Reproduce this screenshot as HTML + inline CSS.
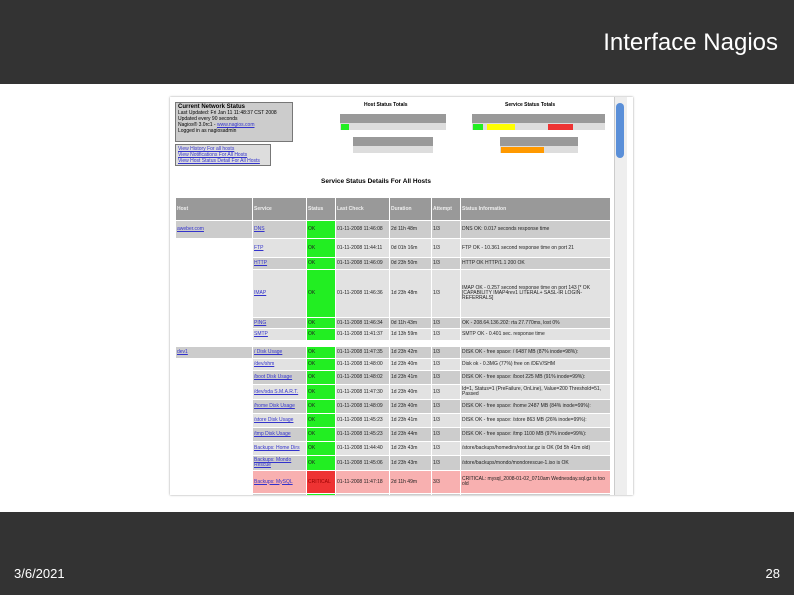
<!DOCTYPE html><html><head><style>
*{margin:0;padding:0;box-sizing:border-box}
body{width:794px;height:595px;position:relative;background:#fff;font-family:"Liberation Sans",sans-serif;overflow:hidden}
.bar{position:absolute;left:0;width:794px;background:#333}
.a{position:absolute}
table{border-collapse:separate;border-spacing:1px;table-layout:fixed;font-size:5px;color:#222}
td{overflow:hidden;padding:0 1px;line-height:5px;vertical-align:middle}
.h td{background:#999;color:#eee;font-weight:bold;font-size:5px}
.g td{background:#ccc}.l td{background:#e2e2e2}
td.ok{background:#2e2!important}td.cr{background:#e33!important;color:#900}
.r td{background:#f8b0b0}
a{color:#33c;text-decoration:underline}
.box{position:absolute;background:#ccc;border:1px solid #777;font-size:5px;line-height:6px;padding:1px 2px}
</style></head><body>
<div class="bar" style="top:0;height:84px"></div>
<div class="a" style="right:16px;top:29px;color:#fff;font-size:24px">Interface Nagios</div>
<div class="bar" style="top:512px;height:83px"></div>
<div class="a" style="left:14px;top:566px;color:#fff;font-size:13px">3/6/2021</div>
<div class="a" style="right:14px;top:566px;color:#fff;font-size:13px">28</div>
<div class="a" style="left:170px;top:97px;width:463px;height:398px;background:#fff;box-shadow:0 0 2px #999;overflow:hidden">
<div class="a" style="left:444px;top:0;width:13px;height:398px;background:#eee;border-left:1px solid #ccc"></div>
<div class="a" style="left:446px;top:6px;width:8px;height:55px;background:#5a8fd8;border-radius:4px"></div>
<div class="box" style="left:5px;top:5px;width:118px;height:40px"><b style="font-size:6px">Current Network Status</b><br>Last Updated: Fri Jan 11 11:48:37 CST 2008<br>Updated every 90 seconds<br>Nagios® 3.0rc1 - <a>www.nagios.com</a><br>Logged in as nagiosadmin</div>
<div class="box" style="left:5px;top:47px;width:96px;height:22px;background:#ddd"><a>View History For all hosts</a><br><a>View Notifications For All Hosts</a><br><a>View Host Status Detail For All Hosts</a></div>
<div class="a" style="left:194px;top:5px;font-size:5px;font-weight:bold">Host Status Totals</div>
<div class="a" style="left:170px;top:17px;width:106px;height:9px;background:#999"></div>
<div class="a" style="left:170px;top:26px;width:106px;height:7px;background:#ddd"></div>
<div class="a" style="left:171px;top:27px;width:8px;height:6px;background:#2e2"></div>
<div class="a" style="left:183px;top:40px;width:80px;height:9px;background:#999"></div>
<div class="a" style="left:183px;top:49px;width:80px;height:7px;background:#ddd"></div>
<div class="a" style="left:335px;top:5px;font-size:5px;font-weight:bold">Service Status Totals</div>
<div class="a" style="left:302px;top:17px;width:133px;height:9px;background:#999"></div>
<div class="a" style="left:302px;top:26px;width:133px;height:7px;background:#ddd"></div>
<div class="a" style="left:303px;top:27px;width:10px;height:6px;background:#2e2"></div>
<div class="a" style="left:317px;top:27px;width:28px;height:6px;background:#ff0"></div>
<div class="a" style="left:378px;top:27px;width:25px;height:6px;background:#e33"></div>
<div class="a" style="left:330px;top:40px;width:78px;height:9px;background:#999"></div>
<div class="a" style="left:330px;top:49px;width:78px;height:7px;background:#ddd"></div>
<div class="a" style="left:331px;top:50px;width:43px;height:6px;background:#f90"></div>
<div class="a" style="left:151px;top:81px;font-size:6.5px;font-weight:bold">Service Status Details For All Hosts</div>
<table class="a" style="left:5px;top:100px;width:436px">
<colgroup><col style="width:76px"><col style="width:53px"><col style="width:28px"><col style="width:53px"><col style="width:41px"><col style="width:28px"><col></colgroup>
<tr class="h" style="height:22px"><td>Host</td><td>Service</td><td class="ok" style="background:#999!important">Status</td><td>Last Check</td><td>Duration</td><td>Attempt</td><td>Status Information</td></tr>
<tr class="g" style="height:17px"><td><a>aweber.com</a></td><td><a>DNS</a></td><td class="ok">OK</td><td>01-11-2008 11:46:08</td><td>2d 11h 48m</td><td>1/3</td><td>DNS OK: 0.017 seconds response time</td></tr>
<tr class="l" style="height:18px"><td style="background:#fff"></td><td><a>FTP</a></td><td class="ok">OK</td><td>01-11-2008 11:44:11</td><td>0d 01h 16m</td><td>1/3</td><td>FTP OK - 10.361 second response time on port 21</td></tr>
<tr class="g" style="height:11px"><td style="background:#fff"></td><td><a>HTTP</a></td><td class="ok">OK</td><td>01-11-2008 11:46:09</td><td>0d 23h 50m</td><td>1/3</td><td>HTTP OK HTTP/1.1 200 OK</td></tr>
<tr class="l" style="height:47px"><td style="background:#fff"></td><td><a>IMAP</a></td><td class="ok">OK</td><td>01-11-2008 11:46:36</td><td>1d 23h 48m</td><td>1/3</td><td>IMAP OK - 0.257 second response time on port 143 [* OK [CAPABILITY IMAP4rev1 LITERAL+ SASL-IR LOGIN-REFERRALS]</td></tr>
<tr class="g" style="height:10px"><td style="background:#fff"></td><td><a>PING</a></td><td class="ok">OK</td><td>01-11-2008 11:46:34</td><td>0d 11h 43m</td><td>1/3</td><td>OK - 208.64.136.202: rta 27.770ms, lost 0%</td></tr>
<tr class="l" style="height:11px"><td style="background:#fff"></td><td><a>SMTP</a></td><td class="ok">OK</td><td>01-11-2008 11:41:37</td><td>1d 13h 59m</td><td>1/3</td><td>SMTP OK - 0.401 sec. response time</td></tr>
<tr style="height:5px"><td colspan="7"></td></tr>
<tr class="g" style="height:11px"><td><a>dev1</a></td><td><a>/ Disk Usage</a></td><td class="ok">OK</td><td>01-11-2008 11:47:35</td><td>1d 23h 42m</td><td>1/3</td><td>DISK OK - free space: / 6487 MB (87% inode=98%):</td></tr>
<tr class="l" style="height:11px"><td style="background:#fff"></td><td><a>/dev/shm</a></td><td class="ok">OK</td><td>01-11-2008 11:48:00</td><td>1d 23h 40m</td><td>1/3</td><td>Disk ok - 0.3MG (77%) free on /DEV/SHM</td></tr>
<tr class="g" style="height:13px"><td style="background:#fff"></td><td><a>/boot Disk Usage</a></td><td class="ok">OK</td><td>01-11-2008 11:48:02</td><td>1d 23h 41m</td><td>1/3</td><td>DISK OK - free space: /boot 225 MB (91% inode=99%):</td></tr>
<tr class="l" style="height:14px"><td style="background:#fff"></td><td><a>/dev/sda S.M.A.R.T.</a></td><td class="ok">OK</td><td>01-11-2008 11:47:30</td><td>1d 23h 40m</td><td>1/3</td><td>Id=1, Status=1 (PreFailure, OnLine), Value=200 Threshold=51, Passed</td></tr>
<tr class="g" style="height:13px"><td style="background:#fff"></td><td><a>/home Disk Usage</a></td><td class="ok">OK</td><td>01-11-2008 11:48:09</td><td>1d 23h 40m</td><td>1/3</td><td>DISK OK - free space: /home 2487 MB (84% inode=99%):</td></tr>
<tr class="l" style="height:13px"><td style="background:#fff"></td><td><a>/store Disk Usage</a></td><td class="ok">OK</td><td>01-11-2008 11:45:23</td><td>1d 23h 41m</td><td>1/3</td><td>DISK OK - free space: /store 863 MB (26% inode=99%):</td></tr>
<tr class="g" style="height:13px"><td style="background:#fff"></td><td><a>/tmp Disk Usage</a></td><td class="ok">OK</td><td>01-11-2008 11:45:23</td><td>1d 23h 44m</td><td>1/3</td><td>DISK OK - free space: /tmp 1100 MB (97% inode=99%):</td></tr>
<tr class="l" style="height:13px"><td style="background:#fff"></td><td><a>Backups: Home Dirs</a></td><td class="ok">OK</td><td>01-11-2008 11:44:40</td><td>1d 23h 43m</td><td>1/3</td><td>/store/backups/homedirs/root.tar.gz is OK (0d 5h 41m old)</td></tr>
<tr class="g" style="height:14px"><td style="background:#fff"></td><td><a>Backups: Mondo Rescue</a></td><td class="ok">OK</td><td>01-11-2008 11:45:06</td><td>1d 23h 43m</td><td>1/3</td><td>/store/backups/mondo/mondorescue-1.iso is OK</td></tr>
<tr class="r" style="height:22px"><td style="background:#fff"></td><td><a>Backups: MySQL</a></td><td class="cr">CRITICAL</td><td>01-11-2008 11:47:18</td><td>2d 11h 49m</td><td>3/3</td><td>CRITICAL: mysql_2008-01-02_0710am Wednesday.sql.gz is too old</td></tr>
<tr class="g" style="height:12px"><td style="background:#fff"></td><td><a>Backups:</a></td><td class="ok">OK</td><td>01-11-2008 11:46:06</td><td>1d 23h 42m</td><td>1/3</td><td>/store/backups/system/etc.tar.gz is OK</td></tr>
</table>
</div>
</body></html>
